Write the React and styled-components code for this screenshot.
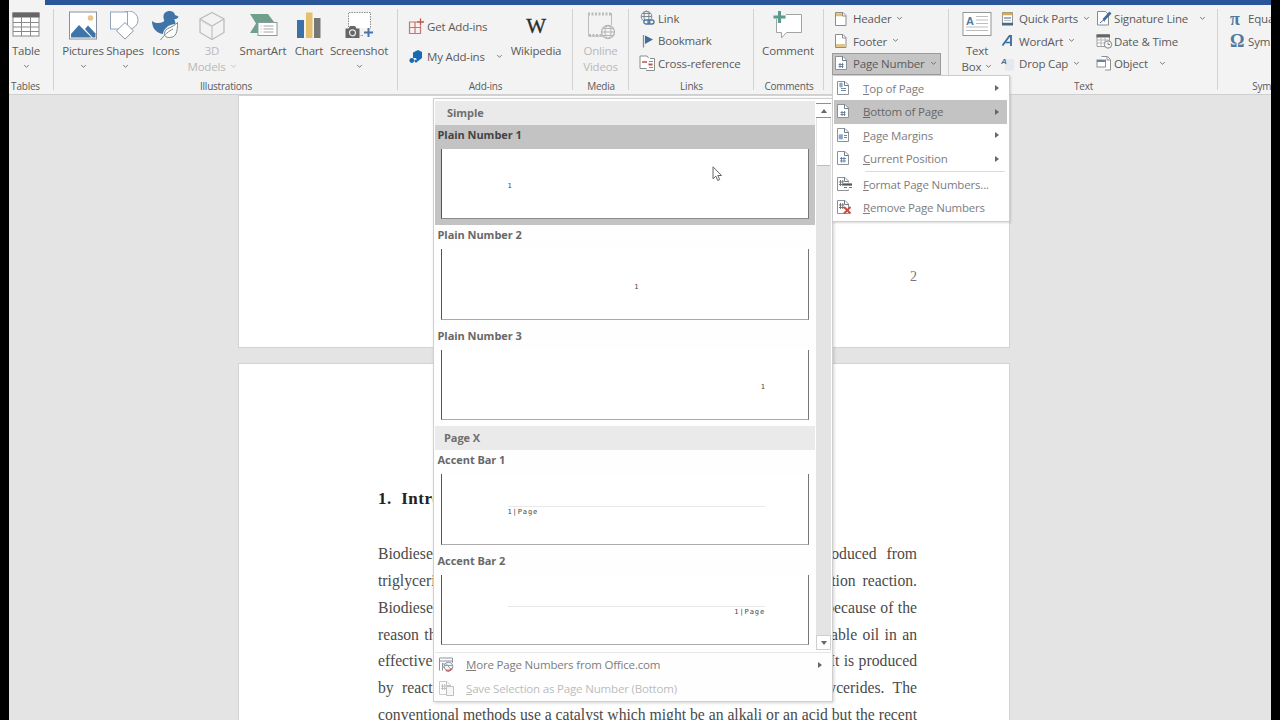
import styled, { createGlobalStyle, css } from 'styled-components';

const GlobalStyle = createGlobalStyle`
  * { box-sizing: border-box; }
  body {
    margin: 0;
    background: #000;
    overflow: hidden;
    font-family: 'Open Sans', 'Noto Sans', sans-serif;
    font-size: 11.5px;
    letter-spacing: -0.18px;
    color: #5a5a5a;
  }
`;

/* ---------- ribbon icons ---------- */

const Svg = ({ w, h, children }) => (
  <svg width={w} height={h} viewBox={`0 0 ${w} ${h}`} fill="none">{children}</svg>
);

const TableIcon = () => (
  <Svg w={28} h={30}>
    <rect x="1" y="2" width="26" height="23" fill="#fff" stroke="#8a8a8a" />
    <rect x=".5" y="1.5" width="27" height="5" fill="#666" />
    <path d="M9.5 6v19M18.5 6v19M1 11.5h26M1 16h26M1 20.5h26" stroke="#8a8a8a" />
  </Svg>
);

const PicturesIcon = () => (
  <Svg w={28} h={30}>
    <rect x=".5" y="1" width="27" height="27" fill="#fff" stroke="#8a9099" />
    <circle cx="21.5" cy="7" r="2.8" fill="#e3c787" />
    <path d="M2 26.5v-3.500l8-9 12.500 12.500z" fill="#3f74a8" />
    <path d="M16 18l3-3.500 7.500 8v4h-3z" fill="#3f74a8" />
  </Svg>
);

const ShapesIcon = () => (
  <Svg w={32} h={30}>
    <circle cx="20" cy="9" r="9" fill="#fff" stroke="#8fa6bd" />
    <rect x="1.500" y="1" width="17" height="17" fill="#fff" stroke="#8fa6bd" />
    <path d="M16 11.500l8.500 8.300-8.500 8.300-8.500-8.300z" fill="#fff" stroke="#8a97a5" />
  </Svg>
);

const DuckIcon = () => (
  <Svg w={30} h={30}>
    <path d="M1 10c2 2 7 3 11 1 2-1 1-2 .5-4C12 2 15 0 18.500 0c3 0 5 1.500 5.500 4l3.500 1.500c-.5 2-2 2.500-4 2.500 0 2 1 3 1 5-3 0-7 1-9.500 4-2 2-3 4-3 6C5 22 1 17 1 10z" fill="#3f74a8" />
    <path d="M26.500 11.500c0 9-1 15-8 15-3 0-5-1-5-4 0-6 8-5 13-11z" fill="#fff" stroke="#7d8a88" />
    <path d="M22 18c-4 2-8 5-12.500 11" stroke="#7d8a88" />
  </Svg>
);

const CubeIcon = () => (
  <Svg w={28} h={30}>
    <path d="M14 1.500l12 6.500v13.500l-12 7-12-7V8z M2 8l12 7 12-7 M14 15v13.500" stroke="#bdbdbd" strokeWidth="1.300" />
    <path d="M4 10.500l10 5.500v11" stroke="#dadada" />
  </Svg>
);

const SmartArtIcon = () => (
  <Svg w={30} h={30}>
    <path d="M2 3h18l6 8-7 11H2l6-9.500z" fill="#6fa08c" />
    <rect x="10" y="11.500" width="19" height="13" fill="#fff" stroke="#8c9aa0" />
    <path d="M12.500 15h1M12.500 18h1M12.500 21h1M15.500 15h10M15.500 18h10M15.500 21h10" stroke="#a5a5a5" />
  </Svg>
);

const ChartIcon = () => (
  <Svg w={26} h={30}>
    <rect x="1" y="9" width="7" height="18" fill="#3c71a7" />
    <rect x="10" y="1.500" width="6.500" height="25.500" fill="#e4c06e" />
    <rect x="18" y="7" width="6.500" height="20" fill="#777" />
  </Svg>
);

const ScreenshotIcon = () => (
  <Svg w={30} h={30}>
    <path d="M4.500 16V1.500h22V18M19 24.500h-3" fill="#fff" stroke="#8f8f8f" strokeDasharray="1.500 1" />
    <path d="M1.500 17.500h3l1.500-2.500h5l1.500 2.500h3v9.500h-14z" fill="#666" />
    <circle cx="8.500" cy="21.800" r="3" fill="#666" stroke="#e6e6e6" strokeWidth="1.200" />
    <path d="M24.500 17v9M20 21.500h9" stroke="#4a76a8" strokeWidth="2" />
  </Svg>
);

const OnlineVideoIcon = () => (
  <Svg w={30} h={30}>
    <path d="M2.500 2v23h16M25.500 2v12" stroke="#bcbcbc" />
    <path d="M2 3h24" stroke="#bcbcbc" strokeWidth="3" strokeDasharray="2 1.500" />
    <path d="M3 24.500h13" stroke="#bcbcbc" strokeWidth="3" strokeDasharray="2 1.500" />
    <circle cx="22" cy="21" r="6.500" fill="#f3f3f3" stroke="#b5b5b5" strokeWidth="1.300" />
    <ellipse cx="22" cy="21" rx="3" ry="6.500" stroke="#b5b5b5" />
    <path d="M15.500 21h13M17 17.500h10M17 24.500h10" stroke="#b5b5b5" />
  </Svg>
);

const CommentIcon = () => (
  <Svg w={32} h={30}>
    <path d="M4.500 3.500h25v18H14.500l-5 5.500v-5.500h-5z" fill="#fff" stroke="#a3a3a3" />
    <path d="M7.500-1v13M1 5.500h13" stroke="#f3f3f3" strokeWidth="5" />
    <path d="M7.500 0v12M1.500 6h12" stroke="#5d9c8c" strokeWidth="3" />
  </Svg>
);

const TextBoxIcon = () => (
  <Svg w={30} h={30}>
    <rect x="1" y="1.500" width="28" height="23" fill="#fff" stroke="#959595" />
    <text x="4" y="13.500" fontFamily="Liberation Sans" fontWeight="bold" fontSize="11" fill="#4f7ba6">A</text>
    <path d="M14 5.500h12M14 9h12M14 12.500h12M4 16h22M4 19.500h22" stroke="#bdbdbd" />
  </Svg>
);

const GetAddinsIcon = () => (
  <Svg w={17} h={17}>
    <path d="M9 4H1.500v11.500h11V8M1.500 9.500h11M7 4v11.500" stroke="#c8746a" strokeWidth="1.200" />
    <path d="M12.500.5v7M9 4h7" stroke="#bd5549" strokeWidth="1.300" />
  </Svg>
);

const MyAddinsIcon = () => (
  <Svg w={16} h={16}>
    <path d="M5 3.500L10 1l4 2v6l-4.500 3.500L8 9H5z" fill="#1669b3" />
    <circle cx="3.800" cy="11.500" r="2.400" fill="#1669b3" />
    <circle cx="8" cy="12" r="1.500" fill="#1669b3" />
  </Svg>
);

const LinkIcon = () => (
  <Svg w={16} h={16}>
    <circle cx="6.500" cy="6.500" r="5.300" stroke="#7a8793" />
    <ellipse cx="6.500" cy="6.500" rx="2.400" ry="5.300" stroke="#7a8793" />
    <path d="M1.500 6.500h10M2.500 3.500h8" stroke="#7a8793" />
    <rect x="3.800" y="10" width="6" height="4" rx="2" fill="#f3f3f3" stroke="#50759c" strokeWidth="1.300" />
    <rect x="8" y="10" width="6" height="4" rx="2" stroke="#50759c" strokeWidth="1.300" />
  </Svg>
);

const BookmarkIcon = () => (
  <Svg w={16} h={16}>
    <path d="M3.500 2v12.500" stroke="#8a8a8a" strokeWidth="1.300" />
    <path d="M5 2.500l8 4-8 4.500z" fill="#41699a" />
  </Svg>
);

const CrossRefIcon = () => (
  <Svg w={17} h={17}>
    <path d="M9 13.500H1V1h7l1.500 2" fill="#fff" stroke="#8c8c8c" />
    <path d="M3 7h5" stroke="#b5574c" strokeWidth="1.500" />
    <path d="M11 3.500h4.500v12H7" fill="#fff" stroke="#8c8c8c" />
    <path d="M10 6.500h4M10 12.500h4" stroke="#8c8c8c" />
    <path d="M9.500 9.500h4" stroke="#b5574c" strokeWidth="2" />
  </Svg>
);

const HeaderIcon = () => (
  <Svg w={14} h={16}>
    <path d="M1.500 1.500H9l3 3v10H1.500z" fill="#fff" stroke="#8c8c8c" />
    <path d="M2 3h6M2 4.500h6" stroke="#e0bf72" strokeWidth="1.500" />
    <path d="M8.500 1.500v3.500H12" stroke="#8c8c8c" />
  </Svg>
);

const FooterIcon = () => (
  <Svg w={14} h={16}>
    <path d="M1.500 1.500H9l3 3v10H1.500z" fill="#fff" stroke="#8c8c8c" />
    <path d="M2 12.500h9.500" stroke="#e0c58a" strokeWidth="3" />
    <path d="M8.500 1.500v3.500H12" stroke="#8c8c8c" />
  </Svg>
);

// mark: where the "#" field sits on the sheet
const PageIcon = ({ mark = 'bottom', extra, faded }) => (
  <Svg w={17} h={17}>
    <g opacity={faded ? 0.45 : 1}>
      <path d="M1.500 1.500H9l3.500 3.500v9.500h-11z" fill="#fff" stroke="#8b9299" />
      <path d="M8.500 1.500v4h4" stroke="#6f7d8b" />
      {mark === 'top' && <path d="M3 4h4M3 6h4M5 2.500v5M5 8.500h5M5 10.500h5" stroke="#6e8cab" />}
      {mark === 'bottom' && <path d="M4.500 9.500h5M4.500 11.500h5M6 8v5M8.500 8v5" stroke="#64788f" strokeWidth=".9" />}
      {mark === 'margin' && <path d="M2.500 9h4M2.500 11h4M4 7v5.500M6 7v5.500M8 8.500h3M8 10.500h3" stroke="#5f86b3" />}
      {mark === 'current' && <path d="M4 8.500h6M4 11h6M5.500 7v5.500M8 7v5.500" stroke="#5f86b3" />}
      {mark === 'left' && <path d="M3 6h5M3 8.500h5M4.500 4v6M6.800 4v6" stroke="#777" />}
      {extra === 'format' && (
        <>
          <rect x="7" y="6.500" width="9" height="7" fill="#fff" />
          <path d="M7 8.500h9" stroke="#555" strokeWidth="2.200" />
          <path d="M8 11.500h3M13 11.500h3" stroke="#777" />
        </>
      )}
      {extra === 'remove' && <path d="M8 8l6.500 6.500M14.500 8L8 14.500" stroke="#cc4b3f" strokeWidth="1.900" />}
      {extra === 'save' && <path d="M8.500 6.500h7v9h-7z" fill="#eee" stroke="#777" />}
    </g>
  </Svg>
);

const OfficeIcon = () => (
  <Svg w={17} h={17}>
    <path d="M1.500 2h13v3h-13zM1.500 5v9.500M4.500 7v7.500M4.500 8h4M4.500 11h3M14.500 5v2" stroke="#8e949b" />
    <circle cx="10.500" cy="10.500" r="4.300" fill="#f5f5f5" stroke="#7f8ea0" />
    <path d="M6.500 9.500h8M8 7.500l5 6" stroke="#8fa0b2" />
    <path d="M8 14c2 1.500 4.500.5 6-1.500" stroke="#c66a5e" strokeWidth="1.800" />
  </Svg>
);

const QuickPartsIcon = () => (
  <Svg w={14} h={16}>
    <rect x="1.500" y="1.500" width="10" height="12.500" fill="#fff" stroke="#999" />
    <path d="M1.500 3h10" stroke="#d9a94c" strokeWidth="2.500" />
    <path d="M3 7h7" stroke="#7a99b3" strokeWidth="1.500" />
    <path d="M3 9.500h7" stroke="#bbb" />
    <path d="M1 13h11" stroke="#466b85" strokeWidth="2.500" />
  </Svg>
);

const WordArtIcon = () => (
  <Svg w={14} h={16}>
    <path d="M1.500 12.500L8.500 3h1.500v10" stroke="#41719e" strokeWidth="1.900" />
    <path d="M4.500 9.500h5" stroke="#41719e" strokeWidth="1.600" />
  </Svg>
);

const DropCapIcon = () => (
  <Svg w={14} h={16}>
    <rect x="4" y="3" width="9" height="11.500" fill="#e5e8ec" />
    <text x="0" y="7.500" fontFamily="Liberation Sans" fontWeight="bold" fontSize="8" fill="#4a6e94">A</text>
  </Svg>
);

const SignatureIcon = () => (
  <Svg w={17} h={17}>
    <path d="M1.500 1.500h8l3 3v10.500h-11z" fill="#fff" stroke="#8c8c8c" />
    <path d="M14.500 2.500L7.500 10" stroke="#406d99" strokeWidth="2.600" />
    <path d="M4 13l3.500-3 1 1.500" stroke="#406d99" />
  </Svg>
);

const DateIcon = () => (
  <Svg w={17} h={17}>
    <path d="M1 1.500h12.500v12H1z" fill="#fff" stroke="#a0a0a0" />
    <path d="M.5 3h13.500" stroke="#666" strokeWidth="3" />
    <path d="M1 7h12M1 10h12M5 5v8M9 5v8" stroke="#b5b5b5" />
    <circle cx="12" cy="11.500" r="3.700" fill="#f5f5f5" stroke="#888" />
    <path d="M12 9.500v2h2" stroke="#888" />
  </Svg>
);

const ObjectIcon = () => (
  <Svg w={17} h={17}>
    <path d="M5.500 1.500h6l3 3v10.500H9" fill="#fff" stroke="#909090" />
    <path d="M11 1.500v3.500h3.500" stroke="#909090" />
    <rect x="1" y="5" width="8.500" height="7" fill="#fff" stroke="#909090" />
    <path d="M1 6h8.500" stroke="#72819b" strokeWidth="2" />
  </Svg>
);

const ChevronIcon = () => (
  <Svg w={7} h={5}>
    <path d="M1.200 1.200l2.300 2 2.300-2" stroke="currentColor" strokeOpacity=".8" />
  </Svg>
);

const CursorIcon = () => (
  <Svg w={11} h={16}>
    <path d="M1 .8v12l2.800-2.600 2 4.300 1.900-.9-1.900-4.100h3.700z" fill="#fff" stroke="#666" />
  </Svg>
);

/* ---------- window ---------- */

const Window = styled.main`
  width: 1262px;
  height: 720px;
  margin: 0 9px;
  display: flex;
  flex-direction: column;
  overflow: hidden;
  background: #e4e4e4;
`;

const TitleBar = styled.header`
  flex: none;
  height: 5px;
  background: #f3f3f3;

  &::before {
    content: '';
    display: block;
    height: 5px;
    margin-left: 36px;
    background: #2a5699;
    border-bottom: 1px solid #8fa8cc;
  }
`;

const Ribbon = styled.nav`
  flex: none;
  display: flex;
  height: 90px;
  background: #f3f3f3;
  border-bottom: 1px solid #cfcfcf;
`;

const Group = styled.section`
  flex: none;
  position: relative;
  display: flex;
  flex-direction: column;
  width: ${(p) => p.$w}px;

  /* divider stops short of the ribbon edges */
  &::after {
    content: '';
    position: absolute;
    right: 0;
    top: 4px;
    bottom: 4px;
    width: 1px;
    background: #d2d2d2;
  }
`;

const GroupBody = styled.div`
  flex: 1;
  display: flex;
  padding-left: ${(p) => p.$pad || 0}px;
`;

const Caption = styled.div`
  height: 16px;
  line-height: 17px;
  font-size: 10px;
  letter-spacing: -0.22px;
  text-align: center;
  white-space: nowrap;
  margin-left: ${(p) => p.$shift || 0}px;
`;

const BigButton = styled.div`
  flex: none;
  display: flex;
  flex-direction: column;
  align-items: center;
  width: ${(p) => p.$w}px;
  padding-top: 6px;
  line-height: 15px;
  white-space: nowrap;
  color: ${(p) => (p.$disabled ? '#b9b9b9' : 'inherit')};

  > svg:first-child { flex: none; margin-bottom: 2px; }
`;

const SecondLine = styled.span`
  display: flex;
  align-items: center;
  justify-content: center;
  gap: 4px;
  height: 16px;
`;

const WikipediaMark = styled.span`
  height: 32px;
  padding-top: 1px;
  line-height: 28px;
  font-family: 'Liberation Serif', serif;
  font-size: 21px;
  color: #2b2b2b;
  -webkit-text-stroke: 0.3px #2b2b2b;
`;

const Column = styled.div`
  flex: none;
  width: ${(p) => p.$w || 'auto'};
  padding-top: ${(p) => p.$top ?? 2}px;
`;

const SmallButton = styled.div`
  display: flex;
  align-items: center;
  width: ${(p) => (p.$w ? `${p.$w}px` : 'auto')};
  height: ${(p) => p.$h || 22.5}px;
  padding-left: ${(p) => p.$pad ?? 3}px;
  white-space: nowrap;

  > span { margin-left: ${(p) => 4 - (p.$pad ?? 3)}px; }
  > svg { margin: -1px 0 0 ${(p) => p.$gap || 5}px; }

  ${(p) => p.$open && css`
    background: #c5c5c5;
    box-shadow: inset 0 0 0 1px #9b9b9b;
  `}
`;

const IconSlot = styled.i`
  display: flex;
  flex: none;
  width: 17px;
`;

const Glyph = styled.span`
  width: 17px;
  font-family: 'Liberation Serif', serif;
  font-style: normal;
  font-weight: bold;
  font-size: 18px;
  line-height: 20px;
  color: #50799f;
`;

/* ---------- document ---------- */

const Canvas = styled.div`
  flex: 1;
  min-height: 0;
  display: flex;
  flex-direction: column;
  align-items: flex-start;
  gap: 15px;
  padding-left: 229px;
`;

const Sheet = styled.article`
  flex: none;
  width: 772px;
  height: ${(p) => p.$h}px;
  padding: ${(p) => p.$padding};
  background: #fff;
  border: 1px solid #d3d3d3;
  overflow: hidden;
  font-family: 'Liberation Serif', serif;
  letter-spacing: 0;
  color: #4a4a4a;
`;

const SheetNumber = styled.div`
  font-size: 14px;
  line-height: 16px;
  text-align: right;
  color: #777;
`;

const Heading = styled.h1`
  margin: 0 0 29px;
  font-size: 17px;
  line-height: 24px;
  letter-spacing: 0.5px;
  white-space: pre;
  color: #222;
`;

const Line = styled.div`
  display: flex;
  justify-content: space-between;
  height: 26.85px;
  line-height: 27px;
  font-size: 15.7px;
  white-space: nowrap;
  word-spacing: ${(p) => p.$space || 0}px;
`;

const FullLine = styled(Line)`
  display: block;
  text-align: justify;
  text-align-last: justify;
  white-space: normal;
  word-spacing: -1.5px;
`;

/* ---------- popups ---------- */

const Menu = styled.div`
  position: absolute;
  left: 832px;
  top: 75px;
  width: 178px;
  height: 147px;
  padding: 0.5px 2px 0 1px;
  background: #fff;
  border: 1px solid #cdcdcd;
  box-shadow: 1px 1px 2px rgba(0, 0, 0, 0.15);
`;

const MenuItem = styled.div`
  display: flex;
  align-items: center;
  height: 23.5px;
  padding: 0 8px 0 2px;
  white-space: nowrap;
  color: ${(p) => (p.$active ? '#666' : '#7d7d7d')};
  background: ${(p) => (p.$active ? '#c3c3c3' : 'none')};

  > svg { flex: none; }
  > span { flex: 1; padding-left: 10px; }
`;

const MenuRule = styled.hr`
  height: 1px;
  margin: 0 2px 1px 31px;
  border: 0;
  background: #dcdcdc;
`;

const Arrow = styled.i`
  border: solid transparent;
  border-width: 3px 0 3px 4px;
  border-left-color: #666;
`;

const Gallery = styled.div`
  position: absolute;
  left: 433px;
  top: 98px;
  width: 400px;
  height: 604px;
  padding: 2px 1px 0;
  background: #fefefe;
  border: 1px solid #cfcfcf;
  box-shadow: 1px 1px 3px rgba(0, 0, 0, 0.18);
`;

const GalleryBody = styled.div`
  display: flex;
  justify-content: space-between;
  height: 552px;
  border-bottom: 1px solid #e6e6e6;
`;

const GalleryList = styled.div`
  width: 380px;
`;

const SectionTitle = styled.div`
  height: ${(p) => p.$h}px;
  padding-left: ${(p) => p.$indent}px;
  line-height: ${(p) => p.$h}px;
  background: #eaeaea;
  font-weight: 700;
  font-size: 11px;
  letter-spacing: -0.05px;
  color: #6e6e6e;
`;

const Preview = styled.div`
  height: 100.5px;
  padding: 0 6px 0 5.5px;
  background: ${(p) => (p.$active ? '#c3c3c3' : 'none')};
  color: ${(p) => (p.$active ? '#444' : '#686868')};
`;

const PreviewName = styled.div`
  height: 24px;
  margin-left: -3px;
  line-height: 20px;
  font-weight: 700;
  font-size: 11px;
  letter-spacing: -0.05px;
`;

const PreviewPage = styled.div`
  height: 70.5px;
  padding: 31.5px 43px 0 66px;
  background: #fff;
  border: solid #777;
  border-width: 0 1px 1px;
  border-left-color: #555;
  border-bottom-color: ${(p) => (p.$active ? '#8a8a8a' : '#aaa')};
  text-align: ${(p) => p.$align};
  font-family: 'DejaVu Sans Mono', monospace;
  font-size: 7px;
  line-height: 11px;
  color: #444;

  > span {
    display: block;
    border-top: 1px solid ${(p) => (p.$bar ? '#e8e8e8' : 'transparent')};
    letter-spacing: ${(p) => (p.$bar ? 0.9 : 0)}px;
  }
`;

const ScrollBar = styled.div`
  display: flex;
  flex-direction: column;
  width: 15px;
  margin-top: 2px;
  height: 547px;
  background: #e4e4e4;
`;

const ScrollButton = styled.div`
  flex: none;
  display: flex;
  align-items: center;
  justify-content: center;
  height: 15px;
  background: #fff;
  border: 1px solid ${(p) => (p.$down ? '#cfcfcf' : '#8f8f8f')};
  border-width: ${(p) => (p.$down ? '1px' : '1px 0 1px')};

  &::before {
    content: '';
    border: solid transparent;
    border-width: ${(p) => (p.$down ? '4px 3.5px 0' : '0 3.5px 4px')};
    border-top-color: ${(p) => (p.$down ? '#666' : 'transparent')};
    border-bottom-color: ${(p) => (p.$down ? 'transparent' : '#666')};
  }
`;

const Thumb = styled.div`
  flex: none;
  height: 48px;
  margin: 0 1px auto;
  background: #fff;
  border-bottom: 1px solid #bdbdbd;
`;

const GalleryAction = styled(MenuItem)`
  padding: 0 9px 0 3px;
  color: ${(p) => (p.$disabled ? '#bcbcbc' : '#7d7d7d')};
  > span { padding-left: 11px; }
`;

const Cursor = styled.div`
  position: absolute;
  left: 712px;
  top: 166px;
`;

const Small = ({ icon, children, chevron, ...rest }) => (
  <SmallButton {...rest}>
    <IconSlot>{icon}</IconSlot>
    <span>{children}</span>
    {chevron && <ChevronIcon />}
  </SmallButton>
);

const Big = ({ icon, label, second, chevron, ...rest }) => (
  <BigButton {...rest}>
    {icon}
    <span>{label}</span>
    <SecondLine>
      {second}
      {chevron && <ChevronIcon />}
    </SecondLine>
  </BigButton>
);

const MENU = [
  { key: 'T', text: 'op of Page', mark: 'top', arrow: true },
  { key: 'B', text: 'ottom of Page', mark: 'bottom', arrow: true, active: true },
  { key: 'P', text: 'age Margins', mark: 'margin', arrow: true },
  { key: 'C', text: 'urrent Position', mark: 'current', arrow: true },
  { rule: true },
  { key: 'F', text: 'ormat Page Numbers...', mark: 'left', extra: 'format' },
  { key: 'R', text: 'emove Page Numbers', mark: 'left', extra: 'remove' },
];

const LINES = [
  ['Biodiesel', 'produced from', 6],
  ['triglycerides', 'transesterification reaction.', 3],
  ['Biodiesel', 'because of the', 0.5],
  ['reason that', 'vegetable oil in an', 1.5],
  ['effective', 'It is produced', 0.5],
  ['by reacting', 'triglycerides. The', 4.5],
];

const GALLERY = [
  { section: 'Simple', indent: 12, h: 23.5 },
  { name: 'Plain Number 1', align: 'left', text: '1', active: true },
  { name: 'Plain Number 2', align: 'center', text: '1' },
  { name: 'Plain Number 3', align: 'right', text: '1' },
  { section: 'Page X', indent: 9, h: 24 },
  { name: 'Accent Bar 1', align: 'left', text: '1|Page', bar: true },
  { name: 'Accent Bar 2', align: 'right', text: '1|Page', bar: true },
];

function App() {
  return (
    <>
      <GlobalStyle />
      <Window>
        <TitleBar />
        <Ribbon>
          <Group $w={45}>
            <GroupBody>
              <Big $w={34} icon={<TableIcon />} label="Table" chevron />
            </GroupBody>
            <Caption $shift={-12}>Tables</Caption>
          </Group>
          <Group $w={344}>
            <GroupBody $pad={8}>
              <Big $w={42} icon={<PicturesIcon />} label="Pictures" chevron />
              <Big $w={42} icon={<ShapesIcon />} label="Shapes" chevron />
              <Big $w={40} icon={<DuckIcon />} label="Icons" />
              <Big $w={52} $disabled icon={<CubeIcon />} label="3D" second="Models" chevron />
              <Big $w={50} icon={<SmartArtIcon />} label="SmartArt" />
              <Big $w={42} icon={<ChartIcon />} label="Chart" />
              <Big $w={58} icon={<ScreenshotIcon />} label="Screenshot" chevron />
            </GroupBody>
            <Caption>Illustrations</Caption>
          </Group>
          <Group $w={175}>
            <GroupBody $pad={8}>
              <Column $w="102px" $top={6.5}>
                <Small $h={30} $pad={2} icon={<GetAddinsIcon />}>Get Add-ins</Small>
                <Small $h={30} $pad={2} $gap={11} icon={<MyAddinsIcon />} chevron>My Add-ins</Small>
              </Column>
              <Big $w={56} icon={<WikipediaMark>W</WikipediaMark>} label="Wikipedia" />
            </GroupBody>
            <Caption>Add-ins</Caption>
          </Group>
          <Group $w={56}>
            <GroupBody>
              <Big $w={55} $disabled icon={<OnlineVideoIcon />} label="Online" second="Videos" />
            </GroupBody>
            <Caption>Media</Caption>
          </Group>
          <Group $w={125}>
            <GroupBody $pad={8}>
              <Column>
                <Small icon={<LinkIcon />}>Link</Small>
                <Small icon={<BookmarkIcon />}>Bookmark</Small>
                <Small $pad={2} icon={<CrossRefIcon />}>Cross-reference</Small>
              </Column>
            </GroupBody>
            <Caption>Links</Caption>
          </Group>
          <Group $w={70}>
            <GroupBody>
              <Big $w={68} icon={<CommentIcon />} label="Comment" />
            </GroupBody>
            <Caption>Comments</Caption>
          </Group>
          <Group $w={125}>
            <GroupBody $pad={8}>
              <Column $top={2.5}>
                <Small $pad={2} icon={<HeaderIcon />} chevron>Header</Small>
                <Small $pad={2} icon={<FooterIcon />} chevron>Footer</Small>
                <Small $pad={2} $w={109} $open icon={<PageIcon />} chevron>Page Number</Small>
              </Column>
            </GroupBody>
          </Group>
          <Group $w={269}>
            <GroupBody $pad={7}>
              <Big $w={42} icon={<TextBoxIcon />} label="Text" second="Box" chevron />
              <Column $w="95px" $top={2.5}>
                <Small icon={<QuickPartsIcon />} chevron>Quick Parts</Small>
                <Small icon={<WordArtIcon />} chevron>WordArt</Small>
                <Small icon={<DropCapIcon />} chevron>Drop Cap</Small>
              </Column>
              <Column $top={2.5}>
                <Small $gap={11} icon={<SignatureIcon />} chevron>Signature Line</Small>
                <Small icon={<DateIcon />}>Date &amp; Time</Small>
                <Small $gap={11} icon={<ObjectIcon />} chevron>Object</Small>
              </Column>
            </GroupBody>
            <Caption>Text</Caption>
          </Group>
          <Group $w={80}>
            <GroupBody $pad={9}>
              <Column $top={2.5}>
                <Small icon={<Glyph>π</Glyph>}>Equation</Small>
                <Small icon={<Glyph>Ω</Glyph>}>Symbol</Small>
              </Column>
            </GroupBody>
            <Caption $shift={26}>Symbols</Caption>
          </Group>
        </Ribbon>

        <Canvas>
          <Sheet $h={253} $padding="173px 92px 0 139px">
            <SheetNumber>2</SheetNumber>
          </Sheet>
          <Sheet $h={400} $padding="123px 92px 0 139px">
            <Heading>1.  Introduction</Heading>
            {LINES.map(([start, end, space]) => (
              <Line key={start + end} $space={space}>
                <span>{start}</span>
                <span>{end}</span>
              </Line>
            ))}
            <FullLine>
              conventional methods use a catalyst which might be an alkali or an acid but the recent
            </FullLine>
          </Sheet>
        </Canvas>
      </Window>

      <Gallery>
        <GalleryBody>
          <GalleryList>
            {GALLERY.map((g) => g.section ? (
              <SectionTitle key={g.section} $indent={g.indent} $h={g.h}>{g.section}</SectionTitle>
            ) : (
              <Preview key={g.name} $active={g.active}>
                <PreviewName>{g.name}</PreviewName>
                <PreviewPage $align={g.align} $bar={g.bar} $active={g.active}>
                  <span>{g.text}</span>
                </PreviewPage>
              </Preview>
            ))}
          </GalleryList>
          <ScrollBar>
            <ScrollButton />
            <Thumb />
            <ScrollButton $down />
          </ScrollBar>
        </GalleryBody>
        <GalleryAction>
          <OfficeIcon />
          <span><u>M</u>ore Page Numbers from Office.com</span>
          <Arrow />
        </GalleryAction>
        <GalleryAction $disabled>
          <PageIcon mark="left" extra="save" faded />
          <span><u>S</u>ave Selection as Page Number (Bottom)</span>
        </GalleryAction>
      </Gallery>

      <Menu>
        {MENU.map((m) => m.rule ? <MenuRule key="rule" /> : (
          <MenuItem key={m.text} $active={m.active}>
            <PageIcon mark={m.mark} extra={m.extra} />
            <span><u>{m.key}</u>{m.text}</span>
            {m.arrow && <Arrow />}
          </MenuItem>
        ))}
      </Menu>

      <Cursor><CursorIcon /></Cursor>
    </>
  );
}

export default App;
